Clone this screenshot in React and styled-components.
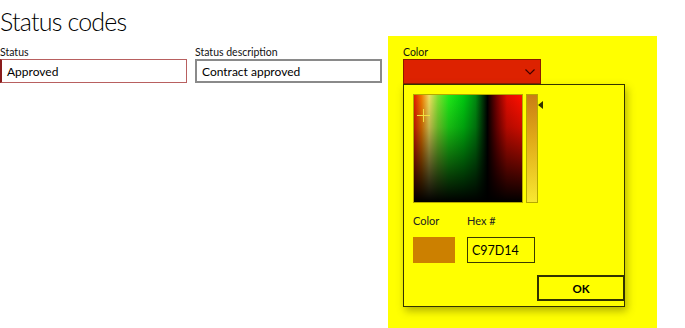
import React from "react";
import styled, { createGlobalStyle } from "styled-components";

const Global = createGlobalStyle`
  html, body {
    margin: 0;
    padding: 0;
    background: #ffffff;
    font-family: Lato, "Open Sans", sans-serif;
    color: #000;
  }
`;

const Page = styled.div`
  width: 685px;
  height: 328px;
  overflow: hidden;
`;

const Title = styled.h1`
  margin: 0;
  padding: 6px 0 0 0;
  height: 30px;
  font-size: 25px;
  font-weight: 300;
  line-height: 30px;
  letter-spacing: -0.8px;
`;

const Row = styled.div`
  display: flex;
  align-items: flex-start;
`;

const Field = styled.div`
  display: flex;
  flex-direction: column;
  width: ${(p) => p.width}px;
  margin-right: ${(p) => p.gap || 0}px;
  padding-top: 9px;
`;

const Label = styled.label`
  font-size: 10.5px;
  line-height: 14px;
  height: 14px;
  color: #111;
`;

const Input = styled.div`
  box-sizing: border-box;
  height: 24px;
  display: flex;
  align-items: center;
  padding-left: 5px;
  font-size: 12px;
  background: #fff;
  border: ${(p) => (p.invalid ? "1px solid #b86060" : "2px solid #8a8a8a")};
  border-left: ${(p) => (p.invalid ? "2px solid #8a1c1c" : "2px solid #8a8a8a")};
`;

const ColorPanel = styled.div`
  position: relative;
  box-sizing: border-box;
  width: 269px;
  height: 292px;
  background: #ffff00;
  padding: 9px 0 0 15px;
  display: flex;
  flex-direction: column;
`;

const Dropdown = styled.div`
  box-sizing: border-box;
  width: 138px;
  height: 25px;
  background: #dd2200;
  border: 1px solid #8a1a00;
  display: flex;
  align-items: center;
  justify-content: flex-end;
  padding-right: 5px;
`;

const Flyout = styled.div`
  position: absolute;
  left: 15px;
  top: 48px;
  box-sizing: border-box;
  width: 222px;
  height: 223px;
  background: #ffff00;
  border: 1px solid #333300;
  box-shadow: 2px 4px 8px rgba(90, 90, 0, 0.45);
  padding: 9px 0 0 9px;
  display: flex;
  flex-direction: column;
`;

const PickerRow = styled.div`
  display: flex;
  align-items: flex-start;
`;

const Spectrum = styled.div`
  position: relative;
  box-sizing: border-box;
  width: 110px;
  height: 109px;
  border: 1px solid #b4a800;
  background:
    linear-gradient(to bottom, rgba(0, 0, 0, 0) 0%, rgba(0, 0, 0, 0.2) 30%, rgba(0, 0, 0, 0.72) 75%, #000 100%),
    linear-gradient(
      to right,
      #e01a00 0%,
      #f07a00 7%,
      #f0e060 14%,
      #80e030 22%,
      #20e818 32%,
      #00c810 46%,
      #008a10 57%,
      #000000 68%,
      #700000 76%,
      #e00c00 86%,
      #ff1000 100%
    );
`;

const Cross = styled.div`
  position: absolute;
  left: 3px;
  top: 14px;
  width: 13px;
  height: 13px;
  &::before,
  &::after {
    content: "";
    position: absolute;
    background: #f0e040;
  }
  &::before {
    left: 6px;
    top: 0;
    width: 1px;
    height: 13px;
  }
  &::after {
    left: 0;
    top: 6px;
    width: 13px;
    height: 1px;
  }
`;

const Slider = styled.div`
  position: relative;
  box-sizing: border-box;
  width: 12px;
  height: 109px;
  margin-left: 3px;
  border: 1px solid #b4a800;
  background: linear-gradient(to bottom, #c97d14 0%, #e0a818 40%, #f8e830 100%);
`;

const Pointer = styled.div`
  position: absolute;
  right: -6px;
  top: 6px;
  width: 0;
  height: 0;
  border-top: 4px solid transparent;
  border-bottom: 4px solid transparent;
  border-right: 5px solid #333300;
`;

const InfoRow = styled.div`
  display: flex;
  align-items: flex-start;
  margin-top: ${(p) => p.top || 0}px;
`;

const SmallLabel = styled.div`
  width: ${(p) => p.width}px;
  font-size: 11px;
  line-height: 14px;
  color: #222;
`;

const Swatch = styled.div`
  width: 42px;
  height: 26px;
  background: #cc8000;
  margin-right: 12px;
`;

const HexInput = styled.div`
  box-sizing: border-box;
  width: 68px;
  height: 26px;
  border: 1px solid #3a3a00;
  background: #ffff00;
  display: flex;
  align-items: center;
  padding-left: 4px;
  font-size: 12.5px;
`;

const OkButton = styled.button`
  box-sizing: border-box;
  align-self: flex-end;
  width: 88px;
  height: 26px;
  margin-top: 12px;
  margin-right: -1px;
  background: #ffff00;
  border: 2px solid #333300;
  font-family: Lato, "Open Sans", sans-serif;
  font-weight: 700;
  font-size: 11.5px;
  color: #000;
  padding: 0;
`;

const Chevron = () => (
  <svg width="10" height="6" viewBox="0 0 10 6">
    <path d="M0.5 0.5 L5 5 L9.5 0.5" fill="none" stroke="#400000" strokeWidth="1.2" />
  </svg>
);

export default function App() {
  return (
    <Page>
      <Global />
      <Title>Status codes</Title>
      <Row>
        <Field width={187} gap={8}>
          <Label>Status</Label>
          <Input invalid>Approved</Input>
        </Field>
        <Field width={187} gap={6}>
          <Label>Status description</Label>
          <Input>Contract approved</Input>
        </Field>
        <ColorPanel>
          <Label>Color</Label>
          <Dropdown>
            <Chevron />
          </Dropdown>
          <Flyout>
            <PickerRow>
              <Spectrum>
                <Cross />
              </Spectrum>
              <Slider>
                <Pointer />
              </Slider>
            </PickerRow>
            <InfoRow top={11}>
              <SmallLabel width={54}>Color</SmallLabel>
              <SmallLabel width={60}>Hex #</SmallLabel>
            </InfoRow>
            <InfoRow top={9}>
              <Swatch />
              <HexInput>C97D14</HexInput>
            </InfoRow>
            <OkButton>OK</OkButton>
          </Flyout>
        </ColorPanel>
      </Row>
    </Page>
  );
}
